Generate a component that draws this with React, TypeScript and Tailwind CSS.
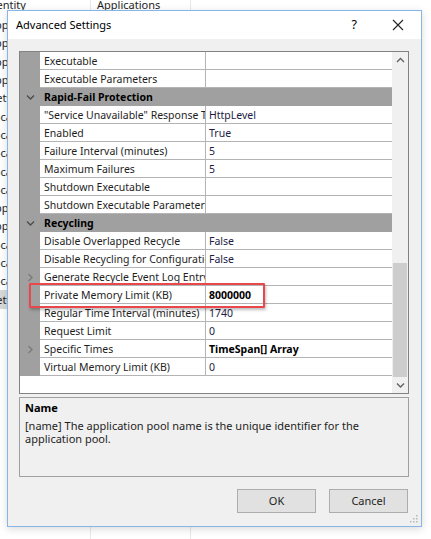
import type { ReactNode } from "react";

type Row =
  | { kind: "group"; label: string }
  | {
      kind: "prop";
      name: string;
      value?: string;
      bold?: boolean;
      expandable?: boolean;
    };

const rows: Row[] = [
  { kind: "prop", name: "Executable" },
  { kind: "prop", name: "Executable Parameters" },
  { kind: "group", label: "Rapid-Fail Protection" },
  { kind: "prop", name: "\"Service Unavailable\" Response Type", value: "HttpLevel" },
  { kind: "prop", name: "Enabled", value: "True" },
  { kind: "prop", name: "Failure Interval (minutes)", value: "5" },
  { kind: "prop", name: "Maximum Failures", value: "5" },
  { kind: "prop", name: "Shutdown Executable" },
  { kind: "prop", name: "Shutdown Executable Parameters" },
  { kind: "group", label: "Recycling" },
  { kind: "prop", name: "Disable Overlapped Recycle", value: "False" },
  { kind: "prop", name: "Disable Recycling for Configuration Changes", value: "False" },
  { kind: "prop", name: "Generate Recycle Event Log Entry", expandable: true },
  { kind: "prop", name: "Private Memory Limit (KB)", value: "8000000", bold: true },
  { kind: "prop", name: "Regular Time Interval (minutes)", value: "1740" },
  { kind: "prop", name: "Request Limit", value: "0" },
  { kind: "prop", name: "Specific Times", value: "TimeSpan[] Array", bold: true, expandable: true },
  { kind: "prop", name: "Virtual Memory Limit (KB)", value: "0" },
];

// identity column of the IIS list behind the dialog
const identities = [
  "ApplicationPoolIdentity",
  "ApplicationPoolIdentity",
  "ApplicationPoolIdentity",
  "ApplicationPoolIdentity",
  "NetworkService",
  "LocalSystem",
  "LocalSystem",
  "LocalSystem",
  "LocalSystem",
  "LocalSystem",
  "ApplicationPoolIdentity",
  "ApplicationPoolIdentity",
  "LocalSystem",
  "LocalSystem",
  "LocalSystem",
  "NetworkService",
];

function Chevron({ dir, color }: { dir: "down" | "right" | "up"; color: string }) {
  const d =
    dir === "down" ? "M1 1.5 L4.5 5 L8 1.5" : dir === "up" ? "M1 5 L4.5 1.5 L8 5" : "M1.5 1 L5 4.5 L1.5 8";
  const size = dir === "right" ? { w: 7, h: 9 } : { w: 9, h: 7 };
  return (
    <svg width={size.w} height={size.h} viewBox={`0 0 ${size.w} ${size.h}`} fill="none">
      <path d={d} stroke={color} strokeWidth="1.3" />
    </svg>
  );
}

function GridRow({ row }: { row: Row }) {
  if (row.kind === "group") {
    return (
      <div className="flex h-[18px] shrink-0 items-center bg-[#a0a0a0]">
        <div className="flex w-[20px] justify-center pl-[1px]">
          <Chevron dir="down" color="#4b4b4b" />
        </div>
        <span className="pl-[4px] font-bold text-black">{row.label}</span>
      </div>
    );
  }
  return (
    <div className="flex h-[18px] shrink-0">
      <div className="flex w-[20px] items-center justify-center bg-[#a0a0a0] pl-[1px]">
        {row.expandable ? <Chevron dir="right" color="#7a7a7a" /> : null}
      </div>
      <div className="flex w-[166px] items-center overflow-hidden whitespace-nowrap border-b border-r border-[#b4b4b4] pl-[4px] text-[#1e1e1e]">
        {row.name}
      </div>
      <div
        className={`flex flex-1 items-center overflow-hidden whitespace-nowrap border-b border-[#b4b4b4] pl-[3px] ${
          row.bold ? "font-bold text-black" : "text-[#1b1b45]"
        }`}
      >
        {row.value ?? ""}
      </div>
    </div>
  );
}

function Button({ children }: { children: ReactNode }) {
  return (
    <button
      type="button"
      className="flex h-[24px] w-[79px] items-center justify-center border border-[#adadad] bg-[#e1e1e1] text-[11px] text-[#1e1e1e]"
    >
      {children}
    </button>
  );
}

export default function App() {
  return (
    <div
      className="relative h-[539px] w-[431px] overflow-hidden bg-white text-[10.5px] leading-[14px]"
      style={{ fontFamily: '"Noto Sans", "Open Sans", sans-serif' }}
    >
      {/* list behind the dialog */}
      <div className="flex h-full">
        <div className="flex w-[91px] flex-col overflow-hidden border-r border-[#e8e8e8] text-[11px]">
          <div className="-ml-[14px] -mt-[2px] h-[18px] shrink-0 whitespace-nowrap text-[#1e1e1e]">Identity</div>
          {identities.map((id, i) => (
            <div
              key={i}
              className={`-ml-[12px] flex h-[18.3px] shrink-0 items-center whitespace-nowrap text-[#1e1e1e] ${
                i === identities.length - 1 ? "bg-[#d9d9d9]" : ""
              }`}
            >
              {id}
            </div>
          ))}
        </div>
        <div className="w-[100px] border-r border-[#e8e8e8] pl-[6px] text-[11px]">
          <div className="-mt-[2px] whitespace-nowrap text-[#1e1e1e]">Applications</div>
        </div>
        <div className="flex-1" />
      </div>

      {/* dialog */}
      <div className="absolute left-[7px] top-[10px] flex h-[517px] w-[415px] flex-col border border-[#86b6e8] bg-[#f0f0f0] shadow-[0_2px_8px_rgba(0,0,0,0.15)]">
        <div className="flex h-[28px] shrink-0 items-center bg-white pl-[8px] text-[11px] text-black">
          <span>Advanced Settings</span>
          <span className="ml-auto mr-[35px] text-[12.5px]">?</span>
          <svg width="12" height="12" viewBox="0 0 12 12" className="mr-[17px]">
            <path d="M1 1 L11 11 M11 1 L1 11" stroke="#222" strokeWidth="1.1" />
          </svg>
        </div>

        <div className="flex flex-1 flex-col pl-[11px] pr-[12px] pt-[12px]">
          <div className="flex h-[343px] shrink-0 border border-[#828282] bg-white">
            <div className="flex w-[372px] flex-col">
              {rows.map((row, i) => (
                <GridRow key={i} row={row} />
              ))}
              <div className="flex-1 bg-white" />
            </div>
            <div className="flex w-[16px] flex-col bg-[#f0f0f0]">
              <div className="flex h-[17px] items-center justify-center">
                <Chevron dir="up" color="#606060" />
              </div>
              <div className="flex-1" />
              <div className="mx-[1px] h-[114px] bg-[#cdcdcd]" />
              <div className="flex h-[16px] items-center justify-center">
                <Chevron dir="down" color="#606060" />
              </div>
            </div>
          </div>

          <div className="mt-[3px] flex h-[80px] shrink-0 flex-col border border-[#a0a0a0] px-[5px] pt-[3px] text-[#1e1e1e]">
            <span className="text-[11px] font-bold text-black">Name</span>
            <p className="mt-[4px] max-w-[342px] text-[11px] leading-[13px]">
              [name] The application pool name is the unique identifier for the application pool.
            </p>
          </div>

          <div className="mt-[12px] flex justify-end gap-[13px] pr-[1px]">
            <Button>OK</Button>
            <Button>Cancel</Button>
          </div>
        </div>

        <svg width="8" height="8" viewBox="0 0 8 8" className="absolute bottom-[3px] right-[3px]">
          <rect x="6" y="0" width="1.5" height="1.5" fill="#b8b8b8" />
          <rect x="3" y="3" width="1.5" height="1.5" fill="#b8b8b8" />
          <rect x="6" y="3" width="1.5" height="1.5" fill="#b8b8b8" />
          <rect x="0" y="6" width="1.5" height="1.5" fill="#b8b8b8" />
          <rect x="3" y="6" width="1.5" height="1.5" fill="#b8b8b8" />
          <rect x="6" y="6" width="1.5" height="1.5" fill="#b8b8b8" />
        </svg>
      </div>

      {/* red highlight annotation */}
      <div className="absolute left-[29px] top-[283px] h-[25px] w-[236px] rounded-[1px] border-[2.5px] border-[#e8474c] shadow-[1px_2px_3px_rgba(0,0,0,0.25)]" />
    </div>
  );
}
